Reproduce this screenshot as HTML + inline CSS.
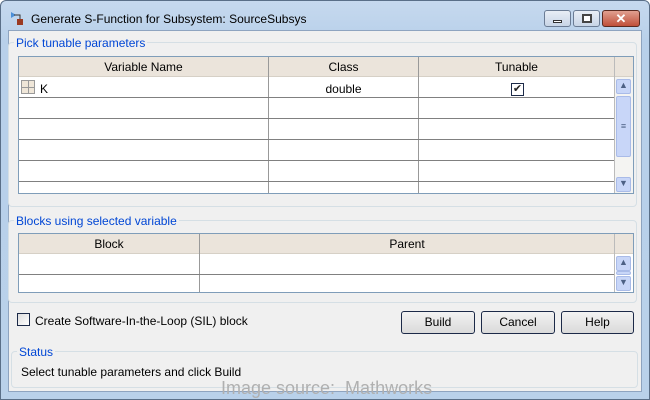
<!DOCTYPE html>
<html><head><style>
*{margin:0;padding:0;box-sizing:border-box}
body{width:650px;height:400px;overflow:hidden;background:#fff;font-family:"Liberation Sans",sans-serif;font-size:12px;color:#000;position:relative}
.a{position:absolute}
.frame{left:0;top:0;width:650px;height:400px;background:linear-gradient(#c6d9ee,#b8d0ea 40px,#b9d1ea);border:1px solid #5a6f88;border-radius:6px 6px 0 0}
.client{left:8px;top:30px;width:634px;height:362px;background:#f0f0f0;border:1px solid #8ea4c0}
.grp{border:1px solid #d5dfe5;border-radius:4px}
.gt{background:#f0f0f0;color:#0046d5;padding:0 2px}
.tbl{background:#fff;border:1px solid #7f9db9}
.hd{background:#ebe4db;text-align:center;line-height:19px;border-bottom:1px solid #d6d0c6}
.vl{width:1px;background:#999}
.hl{height:1px;background:#808080}
.btn{border:1px solid #1c2a48;border-radius:3px;background:linear-gradient(#f3f3f3,#e6e6e6 50%,#dadada);text-align:center;line-height:20px;font-size:12px}
.sb{background:#c8d6f8;border:1px solid #a9bbe8;border-radius:2px;font-size:9px;color:#4d6185;text-align:center}
</style></head><body>
<div class="a frame"></div>
<div class="a" style="left:10px;top:11px;width:12px;height:12px">
<svg width="14" height="14"><path d="M1 1 L6 4 L1 7 Z" fill="#4a8fd9"/><path d="M4 4 H10 V8" stroke="#333" fill="none"/><rect x="7" y="8" width="6" height="6" fill="#9b3a22"/></svg></div>
<div class="a" style="left:31px;top:12px;font-size:12px">Generate S-Function for Subsystem: SourceSubsys</div>
<div class="a" style="left:544px;top:10px;width:27px;height:17px;border:1px solid #6b7c94;border-radius:3px;background:linear-gradient(#e8eef6,#c8d5e6)"><div class="a" style="left:8px;top:9px;width:9px;height:3px;background:#fff;border:1px solid #333"></div></div>
<div class="a" style="left:573px;top:10px;width:27px;height:17px;border:1px solid #6b7c94;border-radius:3px;background:linear-gradient(#e8eef6,#c8d5e6)"><div class="a" style="left:8px;top:3px;width:10px;height:9px;border:2px solid #444;background:#fff"></div></div>
<div class="a" style="left:602px;top:10px;width:38px;height:17px;border:1px solid #5a2a20;border-radius:3px;background:linear-gradient(#e0a090,#c0503a);color:#fff;font-weight:bold;text-align:center;line-height:15px;font-size:13px">✕</div>
<div class="a client"></div>
<!-- group1 -->
<div class="a grp" style="left:8px;top:42px;width:629px;height:165px"></div>
<div class="a gt" style="left:14px;top:36px">Pick tunable parameters</div>
<div class="a tbl" style="left:18px;top:56px;width:616px;height:138px;overflow:hidden">
 <div class="a hd" style="left:0;top:0;width:614px;height:20px"></div>
 <div class="a" style="left:0;top:3px;width:249px;text-align:center">Variable Name</div>
 <div class="a" style="left:250px;top:3px;width:149px;text-align:center">Class</div>
 <div class="a" style="left:400px;top:3px;width:195px;text-align:center">Tunable</div>
 <div class="a vl" style="left:249px;top:0;height:140px"></div>
 <div class="a vl" style="left:399px;top:0;height:140px"></div>
 <div class="a" style="left:595px;top:0;width:1px;height:140px;background:#bbb"></div>
 <div class="a hl" style="left:0;top:40px;width:595px"></div>
 <div class="a hl" style="left:0;top:61px;width:595px"></div>
 <div class="a hl" style="left:0;top:82px;width:595px"></div>
 <div class="a hl" style="left:0;top:103px;width:595px"></div>
 <div class="a hl" style="left:0;top:124px;width:595px"></div>
 <div class="a" style="left:2px;top:23px;width:14px;height:14px;border:1px solid #999;background:#efe6d8"><div class="a" style="left:6px;top:0;width:1px;height:12px;background:#999"></div><div class="a" style="left:0;top:6px;width:12px;height:1px;background:#999"></div></div>
 <div class="a" style="left:21px;top:25px">K</div>
 <div class="a" style="left:250px;top:25px;width:149px;text-align:center">double</div>
 <div class="a" style="left:492px;top:26px;width:13px;height:13px;border:1px solid #1c2a48;background:#fff;font-size:11px;line-height:11px;text-align:center;color:#222">✔</div>
 <div class="a" style="left:596px;top:20px;width:18px;height:118px;background:#f4f4f2"></div>
 <div class="a sb" style="left:597px;top:22px;width:15px;height:15px">▲</div>
 <div class="a sb" style="left:597px;top:39px;width:15px;height:61px;line-height:59px">≡</div>
 <div class="a sb" style="left:597px;top:120px;width:15px;height:15px">▼</div>
</div>
<!-- group2 -->
<div class="a grp" style="left:8px;top:220px;width:629px;height:83px"></div>
<div class="a gt" style="left:14px;top:214px">Blocks using selected variable</div>
<div class="a tbl" style="left:18px;top:233px;width:616px;height:60px;overflow:hidden">
 <div class="a hd" style="left:0;top:0;width:614px;height:20px"></div>
 <div class="a" style="left:0;top:3px;width:180px;text-align:center">Block</div>
 <div class="a" style="left:181px;top:3px;width:414px;text-align:center">Parent</div>
 <div class="a vl" style="left:180px;top:0;height:60px"></div>
 <div class="a" style="left:595px;top:0;width:1px;height:60px;background:#bbb"></div>
 <div class="a hl" style="left:0;top:40px;width:595px"></div>
 <div class="a sb" style="left:597px;top:22px;width:15px;height:15px">▲</div>
 <div class="a sb" style="left:597px;top:37px;width:15px;height:4px"></div>
 <div class="a sb" style="left:597px;top:42px;width:15px;height:15px">▼</div>
</div>
<div class="a" style="left:17px;top:313px;width:13px;height:13px;border:1px solid #1c2a48;background:linear-gradient(135deg,#ddd,#fff)"></div>
<div class="a" style="left:35px;top:314px">Create Software-In-the-Loop (SIL) block</div>
<div class="a btn" style="left:401px;top:311px;width:74px;height:23px">Build</div>
<div class="a btn" style="left:481px;top:311px;width:74px;height:23px">Cancel</div>
<div class="a btn" style="left:561px;top:311px;width:73px;height:23px">Help</div>
<div class="a grp" style="left:11px;top:351px;width:627px;height:37px"></div>
<div class="a gt" style="left:17px;top:345px">Status</div>
<div class="a" style="left:21px;top:365px">Select tunable parameters and click Build</div>
<div class="a" style="left:221px;top:378px;font-size:18px;color:#b0b0b0">Image source:&nbsp; Mathworks</div>
</body></html>
